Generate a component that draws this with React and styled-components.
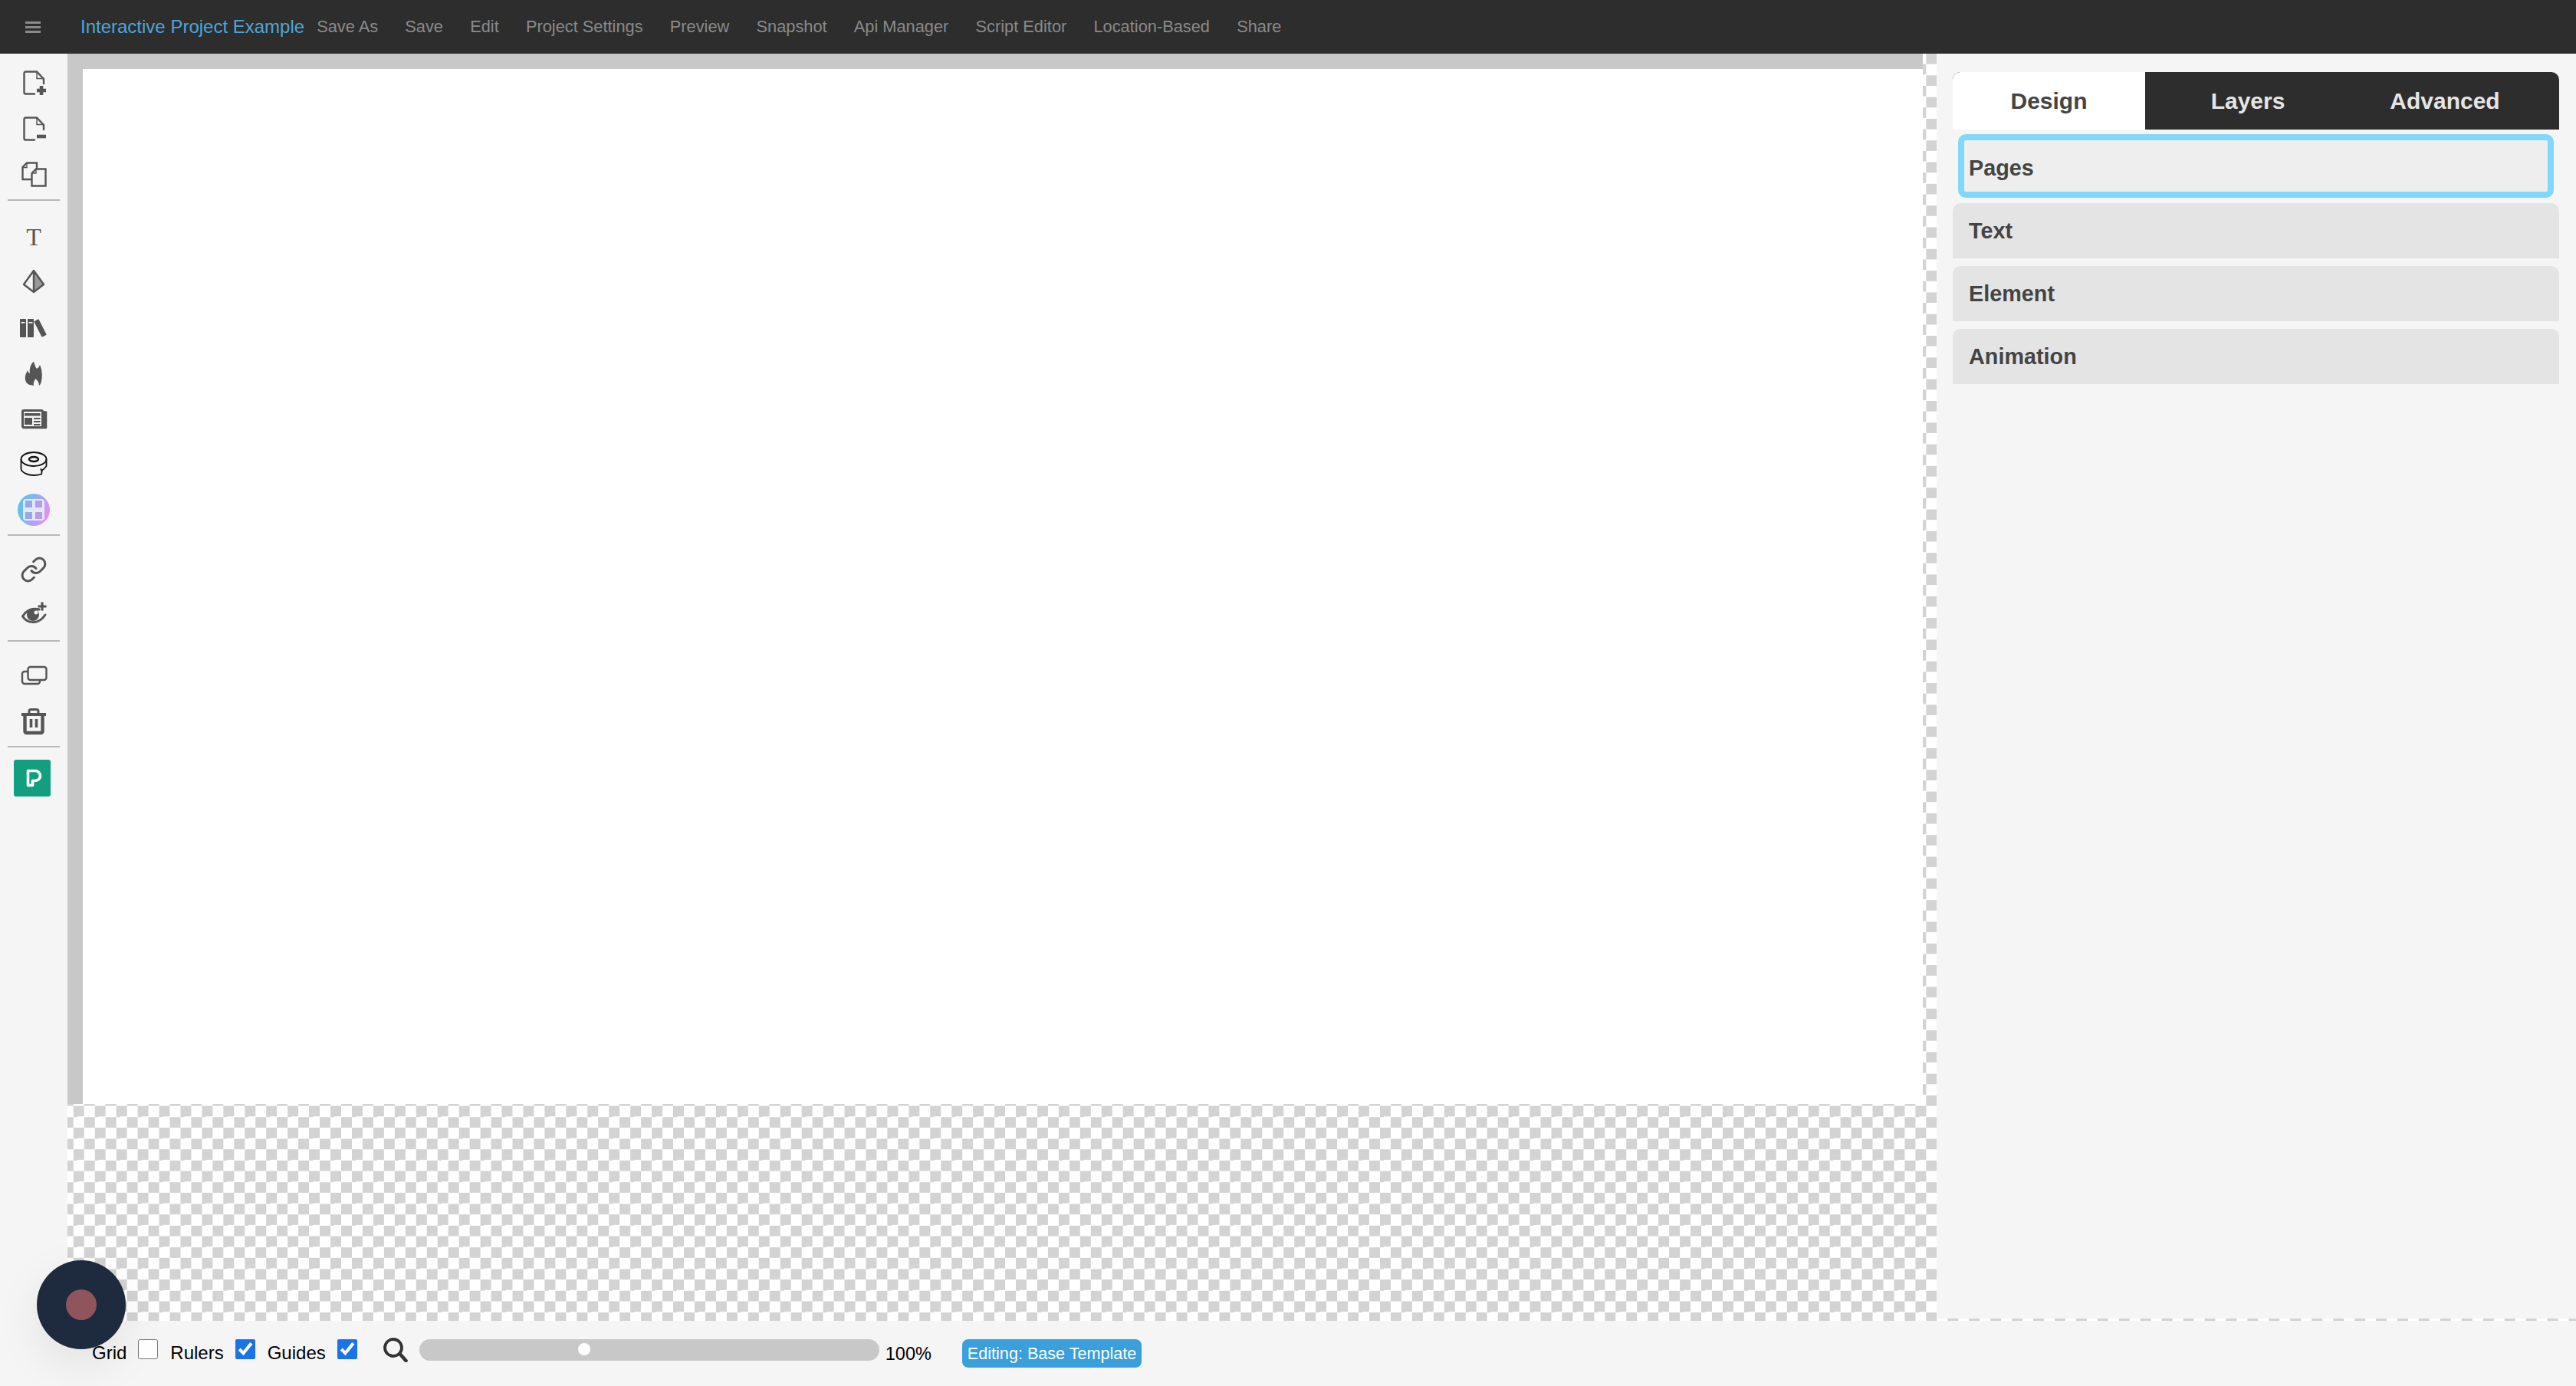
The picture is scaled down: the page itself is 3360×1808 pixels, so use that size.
import React from 'react';
import styled, { createGlobalStyle } from 'styled-components';
import { Link as LinkIcon } from 'lucide-react';

const GlobalStyle = createGlobalStyle`
    html, body {
        margin: 0;
        padding: 0;
        background: #f5f5f5;
        font-family: 'Liberation Sans', Arial, sans-serif;
    }
`;

const NAV_ITEMS = [
    'Save As',
    'Save',
    'Edit',
    'Project Settings',
    'Preview',
    'Snapshot',
    'Api Manager',
    'Script Editor',
    'Location-Based',
    'Share',
];

const SECTIONS = ['Text', 'Element', 'Animation'];

const ICON = '#555';

const FileAdd = ({ minus }) => (
    <svg width="36" height="36" viewBox="0 0 36 36" fill="none">
        <path
            d="M19 33.5H7.5a2 2 0 0 1-2-2V6.5a2 2 0 0 1 2-2H22l9 9.5V20"
            stroke={ICON}
            strokeWidth="2.4"
            strokeLinecap="round"
        />
        <path d="M22 4.5V13.5H31" stroke={ICON} strokeWidth="1.4" />
        <path d="M22 29H34" stroke={ICON} strokeWidth="4.6" />
        {!minus && <path d="M28 23V35" stroke={ICON} strokeWidth="4.6" />}
    </svg>
);

const FileCopy = () => (
    <svg width="36" height="36" viewBox="0 0 36 36" fill="none" stroke={ICON} strokeWidth="2.4">
        <path d="M15 25H3.5V9L9 3.5H22V11" />
        <path d="M3.5 9.5H9V3.5" strokeWidth="1.4" />
        <path d="M15.5 33.5V17L21 11.5H33.5V33.5Z" />
        <path d="M15.5 17H21V11.5" strokeWidth="1.4" />
    </svg>
);

const Pyramid = () => (
    <svg width="36" height="36" viewBox="0 0 36 36" fill="none">
        <path d="M18 3L31 21L18 31Z" fill="#999" />
        <path d="M18 3L5 21L18 31L31 21Z M18 3V31" stroke={ICON} strokeWidth="2.4" strokeLinejoin="round" />
    </svg>
);

const Books = () => (
    <svg width="36" height="36" viewBox="0 0 36 36">
        <rect x="0" y="7" width="8" height="24" rx="0.8" fill={ICON} />
        <rect x="10" y="7" width="8" height="24" rx="0.8" fill={ICON} />
        <rect x="1.5" y="11" width="5" height="1.6" fill="#f5f5f5" />
        <rect x="11.5" y="11" width="5" height="1.6" fill="#f5f5f5" />
        <rect x="23" y="7.5" width="7" height="23" rx="0.8" fill={ICON} transform="rotate(-27 26.5 19)" />
    </svg>
);

const Flame = () => (
    <svg width="36" height="36" viewBox="0 0 36 36">
        <path
            fill={ICON}
            d="M18 2.5C19 6 20 10 22 12C24 11 25.5 9 26 7C29 13 29.5 22 28 28C27.5 31 26.5 33 25 34C25 30 23 27 20 25C19.5 28 17 29 18 34L13 33C8 32 6 26 7 22C7.5 18 9 17 10 14C11 17 12 18 13 18C12 12 14 6 18 2.5Z"
        />
    </svg>
);

const Newspaper = () => (
    <svg width="36" height="36" viewBox="0 0 36 36" fill="none">
        <path d="M29 9.5H34V30H4" stroke={ICON} strokeWidth="2.6" strokeLinejoin="round" />
        <rect x="30" y="10" width="4" height="20" fill={ICON} />
        <rect x="3.5" y="7.5" width="26" height="22" rx="1.5" stroke={ICON} strokeWidth="3" />
        <rect x="6" y="11" width="20.5" height="3.5" fill={ICON} />
        <rect x="6" y="17" width="10" height="9" fill={ICON} />
        <path d="M18 18H26.5M18 22H26.5M18 26H26.5" stroke={ICON} strokeWidth="2" />
    </svg>
);

const Tape = () => (
    <svg width="36" height="36" viewBox="0 0 36 36" fill="none" stroke="#111" strokeWidth="1.8">
        <ellipse cx="18" cy="12" rx="16.5" ry="9" />
        <ellipse cx="18" cy="12" rx="6" ry="3" strokeWidth="2.4" />
        <path d="M1.5 12V25C3 30 11 33 18 33C21 33 25 32.5 28 31.5L29 26L31 25L34.5 21V12" />
        <path d="M27 24L28 27.5" strokeWidth="1.4" />
    </svg>
);

const Palette = () => (
    <svg width="44" height="44" viewBox="0 0 44 44">
        <defs>
            <linearGradient id="paletteGrad" x1="0" y1="0.3" x2="1" y2="0.7">
                <stop offset="0" stopColor="#4fc8f0" />
                <stop offset="1" stopColor="#e88ef2" />
            </linearGradient>
        </defs>
        <circle cx="22" cy="22" r="21" fill="url(#paletteGrad)" />
        <rect x="8" y="8" width="28" height="28" rx="4" fill="#fff" opacity="0.72" />
        <rect x="11" y="10" width="9" height="9" fill="#99a6ea" />
        <rect x="24" y="10" width="9" height="9" fill="#b29fea" />
        <rect x="11" y="25" width="9" height="9" fill="#99a6ea" />
        <rect x="24" y="25" width="9" height="9" fill="#b29fea" />
    </svg>
);

const EyePlus = () => (
    <svg width="36" height="36" viewBox="0 0 36 36" fill="none">
        <path
            d="M3.5 22C9 13.5 17 10.5 25 13M3.5 22C9 31 24 34 33 20"
            stroke={ICON}
            strokeWidth="3"
            strokeLinecap="round"
        />
        <circle cx="17" cy="20" r="8" fill={ICON} />
        <circle cx="21" cy="17" r="2.5" fill="#f5f5f5" />
        <path d="M23.5 9H34.5M29 3.5V14.5" stroke={ICON} strokeWidth="3.2" />
    </svg>
);

const Windows = () => (
    <svg width="36" height="36" viewBox="0 0 36 36" fill="none" stroke={ICON} strokeWidth="2.4">
        <rect x="10.5" y="7" width="24" height="17" rx="3" />
        <path d="M10 13H6a3 3 0 0 0-3 3v10a3 3 0 0 0 3 3h17a3 3 0 0 0 3-3v-2" />
    </svg>
);

const Trash = () => (
    <svg width="36" height="36" viewBox="0 0 36 36" fill="none" stroke={ICON}>
        <path d="M2 9H34" strokeWidth="4" />
        <path d="M12 8V5a2.5 2.5 0 0 1 2.5-2.5h7A2.5 2.5 0 0 1 24 5v3" strokeWidth="3" />
        <path d="M6.5 10V31a2 2 0 0 0 2 2h19a2 2 0 0 0 2-2V10" strokeWidth="4.4" />
        <path d="M14.5 15V26M21.5 15V26" strokeWidth="3.6" />
    </svg>
);

const GreenLogo = () => (
    <svg width="48" height="48" viewBox="0 0 48 48">
        <rect width="48" height="48" rx="3" fill="#129f80" />
        <path
            d="M18.5 14.5H28a6.5 6.5 0 0 1 0 13H24.5V33.5H18.5Z"
            fill="none"
            stroke="#fff"
            strokeWidth="3.6"
            strokeLinejoin="round"
        />
    </svg>
);

const SearchIcon = () => (
    <svg width="32" height="32" viewBox="0 0 32 32" fill="none" stroke="#333">
        <circle cx="13" cy="13" r="11" strokeWidth="3.8" />
        <path d="M21.5 21L29.5 30" strokeWidth="4.6" strokeLinecap="round" />
    </svg>
);

const App = () => {
    return (
        <>
            <GlobalStyle />
            <Page>
                <TopBar>
                    <Hamburger>
                        <i />
                        <i />
                        <i />
                    </Hamburger>
                    <ProjectTitle>Interactive Project Example</ProjectTitle>
                    <NavList>
                        {NAV_ITEMS.map(item => (
                            <NavItem key={item}>{item}</NavItem>
                        ))}
                    </NavList>
                </TopBar>

                <Main>
                    <Sidebar>
                        <ToolGroup>
                            <ToolSlot><FileAdd /></ToolSlot>
                            <ToolSlot><FileAdd minus /></ToolSlot>
                            <ToolSlot><FileCopy /></ToolSlot>
                        </ToolGroup>
                        <ToolDivider $before={3} $after={17} />
                        <ToolGroup>
                            <ToolSlot $h={59.33}><TextTool>T</TextTool></ToolSlot>
                            <ToolSlot $h={59.33}><Pyramid /></ToolSlot>
                            <ToolSlot $h={59.33}><Books /></ToolSlot>
                            <ToolSlot $h={59.33}><Flame /></ToolSlot>
                            <ToolSlot $h={59.33}><Newspaper /></ToolSlot>
                            <ToolSlot $h={59.33}><Tape /></ToolSlot>
                            <ToolSlot $h={59.33}><Palette /></ToolSlot>
                        </ToolGroup>
                        <ToolDivider $before={3} $after={15.5} />
                        <ToolGroup>
                            <ToolSlot $h={57}><LinkIcon size={36} color={ICON} strokeWidth={2} /></ToolSlot>
                            <ToolSlot $h={57}><EyePlus /></ToolSlot>
                        </ToolGroup>
                        <ToolDivider $before={6.5} $after={14} />
                        <ToolGroup>
                            <ToolSlot><Windows /></ToolSlot>
                            <ToolSlot><Trash /></ToolSlot>
                        </ToolGroup>
                        <ToolDivider $before={2} $after={10} />
                        <ToolSlot $left={4}><GreenLogo /></ToolSlot>
                    </Sidebar>

                    <Stage>
                        <PageFrame>
                            <PageSheet />
                        </PageFrame>
                    </Stage>

                    <Panel>
                        <Tabs>
                            <Tab $active>Design</Tab>
                            <Tab>Layers</Tab>
                            <Tab $end>Advanced</Tab>
                        </Tabs>
                        <PagesRow>Pages</PagesRow>
                        <SectionList>
                            {SECTIONS.map(title => (
                                <SectionRow key={title}>{title}</SectionRow>
                            ))}
                        </SectionList>
                    </Panel>
                </Main>

                <BottomBar>
                    <ToggleLabel>Grid</ToggleLabel>
                    <Check type="checkbox" readOnly />
                    <ToggleLabel>Rulers</ToggleLabel>
                    <Check type="checkbox" checked readOnly />
                    <ToggleLabel>Guides</ToggleLabel>
                    <Check type="checkbox" checked readOnly />
                    <SearchButton>
                        <SearchIcon />
                    </SearchButton>
                    <ZoomTrack>
                        <ZoomThumb />
                    </ZoomTrack>
                    <ZoomValue>100%</ZoomValue>
                    <EditingBadge>Editing: Base Template</EditingBadge>
                </BottomBar>

                <FloatButton>
                    <FloatDot />
                </FloatButton>
            </Page>
        </>
    );
};

const Page = styled.div`
    position: relative;
    display: grid;
    grid-template-rows: 70px 1653px 85px;
    height: 1808px;
    overflow: hidden;
    background: #f5f5f5;
`;

const TopBar = styled.header`
    display: flex;
    align-items: center;
    padding-left: 33px;
    background: #2d2d2d;
    font-size: 21.8px;
`;

const Hamburger = styled.div`
    display: flex;
    flex-direction: column;
    gap: 3px;
    width: 20px;
    margin-right: 52px;
    i {
        display: block;
        height: 3px;
        background: #8a8a8a;
    }
`;

const ProjectTitle = styled.span`
    margin-right: 16px;
    color: #4ea6d6;
    font-size: 24px;
`;

const NavList = styled.nav`
    display: flex;
    gap: 35.2px;
`;

const NavItem = styled.span`
    color: #8a8a8a;
`;

const Main = styled.main`
    display: flex;
    background-color: #fff;
    background-image: repeating-conic-gradient(#d3d3d3 0 25%, #fff 0 50%);
    background-size: 27.94px 28.32px;
    background-position: -2px 13.64px;
`;

const Sidebar = styled.aside`
    flex: 0 0 88px;
    display: flex;
    flex-direction: column;
    padding-top: 7px;
    box-sizing: border-box;
    background: #f5f5f5;
`;

const ToolGroup = styled.div`
    display: flex;
    flex-direction: column;
`;

const ToolSlot = styled.div`
    display: flex;
    flex: none;
    align-items: center;
    justify-content: center;
    box-sizing: border-box;
    height: ${p => p.$h || 60}px;
    padding-right: ${p => p.$left || 0}px;
`;

const ToolDivider = styled.hr`
    flex: none;
    width: 68px;
    height: 2px;
    margin: ${p => p.$before}px 0 ${p => p.$after}px 10px;
    border: 0;
    background: #b8b8b8;
`;

const TextTool = styled.span`
    color: ${ICON};
    font-family: 'Liberation Serif', 'Times New Roman', serif;
    font-size: 32px;
    line-height: 36px;
`;

const Stage = styled.section`
    flex: 1;
`;

const PageFrame = styled.div`
    box-sizing: border-box;
    width: 2420px;
    height: 1370px;
    padding: 20px 0 0 20px;
    background: #c8c8c8;
`;

const PageSheet = styled.div`
    height: 100%;
    background: #fff;
`;

const Panel = styled.aside`
    flex: 0 0 834px;
    box-sizing: border-box;
    height: 1650px;
    padding: 24px 22px 0 21px;
    background: #f5f5f5;
`;

const Tabs = styled.div`
    display: grid;
    grid-template-columns: 251px 268px 1fr;
    height: 75px;
    overflow: hidden;
    border-radius: 10px 10px 0 0;
    background: #2d2d2d;
`;

const Tab = styled.div`
    display: flex;
    align-items: center;
    justify-content: center;
    padding-right: ${p => (p.$end ? 26 : 0)}px;
    background: ${p => (p.$active ? '#fff' : 'transparent')};
    color: ${p => (p.$active ? '#444' : '#e5e5e5')};
    font-size: 30px;
    font-weight: 700;
`;

const PagesRow = styled.div`
    display: flex;
    align-items: center;
    box-sizing: border-box;
    height: 83px;
    margin: 6px 7px 7px;
    padding: 5px 0 0 6px;
    border: 8px solid #82d8fc;
    border-radius: 10px;
    background: #eee;
    color: #444;
    font-size: 28.8px;
    font-weight: 700;
`;

const SectionList = styled.div`
    display: flex;
    flex-direction: column;
    gap: 10px;
`;

const SectionRow = styled.div`
    display: flex;
    align-items: center;
    height: 72px;
    padding-left: 21px;
    border-radius: 10px 10px 0 0;
    background: #e4e4e4;
    color: #444;
    font-size: 28.8px;
    font-weight: 700;
`;

const BottomBar = styled.footer`
    display: flex;
    align-items: flex-start;
    box-sizing: border-box;
    padding: 24px 0 0 120px;
    background: #f5f5f5;
    color: #000;
    font-size: 24px;
    line-height: 28px;
`;

const ToggleLabel = styled.span`
    margin-top: 4px;
`;

const Check = styled.input`
    width: 26px;
    height: 26px;
    margin: 0 16px 0 15px;
    accent-color: #1a73e8;
`;

const SearchButton = styled.div`
    display: flex;
    height: 32px;
    margin: -2px 15px 0 18px;
`;

const ZoomTrack = styled.div`
    position: relative;
    width: 600px;
    height: 28px;
    border-radius: 14px;
    background: #c8c8c8;
`;

const ZoomThumb = styled.span`
    position: absolute;
    top: 5px;
    left: 207px;
    width: 16px;
    height: 16px;
    border-radius: 50%;
    background: #fff;
`;

const ZoomValue = styled.span`
    margin: 5px 40px 0 8px;
    font-size: 23.5px;
`;

const EditingBadge = styled.span`
    padding: 0 7px;
    border-radius: 8px;
    background: #3a9fdb;
    color: #fff;
    font-size: 21.6px;
    line-height: 37px;
`;

const FloatButton = styled.div`
    position: absolute;
    left: 48px;
    bottom: 48px;
    display: flex;
    align-items: center;
    justify-content: center;
    width: 116px;
    height: 116px;
    border-radius: 50%;
    background: #1e2a3e;
    box-shadow: 0 20px 60px rgba(0, 0, 0, 0.08);
`;

const FloatDot = styled.span`
    width: 40px;
    height: 40px;
    border-radius: 50%;
    background: #8f545c;
`;

export default App;
